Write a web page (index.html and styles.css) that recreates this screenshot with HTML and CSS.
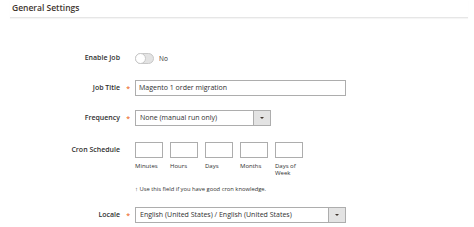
FILE: index.html
```html
<!DOCTYPE html>
<html lang="en">
<head>
  <meta charset="UTF-8" />
  <title>General Settings</title>
  <link rel="stylesheet" href="styles.css">
</head>
<body>
  <div class="fieldset">
    <div class="fieldset-title">General Settings</div>

    <div class="field">
      <div class="field-label"><span>Enable Job</span></div>
      <div class="control">
        <span class="switch"><span class="knob"></span></span>
        <span class="switch-text">No</span>
      </div>
    </div>

    <div class="field">
      <div class="field-label required"><span>Job Title</span></div>
      <div class="control">
        <div class="input wide">Magento 1 order migration</div>
      </div>
    </div>

    <div class="field">
      <div class="field-label required"><span>Frequency</span></div>
      <div class="control">
        <div class="select">
          <span class="select-value">None (manual run only)</span>
          <span class="select-btn"><i></i></span>
        </div>
      </div>
    </div>

    <div class="field cron">
      <div class="field-label"><span>Cron Schedule</span></div>
      <div class="control">
        <div class="cron-row">
          <div class="cron-item"><div class="input box"></div><div class="note">Minutes</div></div>
          <div class="cron-item"><div class="input box"></div><div class="note">Hours</div></div>
          <div class="cron-item"><div class="input box"></div><div class="note">Days</div></div>
          <div class="cron-item"><div class="input box"></div><div class="note">Months</div></div>
          <div class="cron-item"><div class="input box"></div><div class="note">Days of<br>Week</div></div>
        </div>
        <div class="hint">&uarr; Use this field if you have good cron knowledge.</div>
      </div>
    </div>

    <div class="field">
      <div class="field-label required"><span>Locale</span></div>
      <div class="control">
        <div class="select select-wide">
          <span class="select-value">English (United States) / English (United States)</span>
          <span class="select-btn"><i></i></span>
        </div>
      </div>
    </div>
  </div>
</body>
</html>
```

FILE: styles.css
```css
body {
  margin: 0;
  background: #ffffff;
  font-family: "Open Sans", "Liberation Sans", sans-serif;
  color: #303030;
}
.fieldset-title {
  margin: 0 6px 0 10px;
  padding: 2px 0 4px 2px;
  font-size: 8.5px;
  line-height: 11px;
  font-weight: 600;
  color: #41362f;
  border-bottom: 1px solid #e6e6e6;
  box-shadow: 0 1px 1px rgba(0, 0, 0, 0.04);
}
.field {
  display: flex;
  align-items: flex-start;
  margin-bottom: 14px;
}
.fieldset-title + .field {
  margin-top: 32px;
}
.field.cron {
  margin-top: 16px;
}
.field-label {
  width: 120px;
  flex-shrink: 0;
  padding-right: 15px;
  position: relative;
  text-align: right;
  font-size: 7px;
  line-height: 16px;
  font-weight: 600;
  color: #303030;
}
.field-label.required::after {
  content: "*";
  position: absolute;
  right: 5px;
  top: 1px;
  color: #eb5202;
  font-size: 7px;
  font-weight: 400;
}
.control {
  display: flex;
  align-items: center;
  min-height: 16px;
  flex-wrap: wrap;
}
.cron .control {
  display: block;
}
.switch {
  position: relative;
  display: inline-block;
  width: 17px;
  height: 9px;
  border: 1px solid #c8c8c8;
  border-radius: 6px;
  background: #e3e3e3;
}
.knob {
  position: absolute;
  left: -1px;
  top: -1px;
  width: 9px;
  height: 9px;
  border: 1px solid #c8c8c8;
  border-radius: 50%;
  background: #ffffff;
}
.switch-text {
  margin-left: 5px;
  font-size: 6.5px;
  color: #303030;
}
.input {
  box-sizing: border-box;
  height: 16px;
  border: 1px solid #adadad;
  background: #ffffff;
  font-size: 7px;
  line-height: 14px;
  padding: 0 3px;
  color: #303030;
}
.wide {
  width: 211px;
}
.select {
  box-sizing: border-box;
  display: flex;
  width: 136px;
  height: 16px;
  border: 1px solid #adadad;
  background: #ffffff;
  font-size: 7px;
  line-height: 14px;
}
.select-wide {
  width: 211px;
}
.select-value {
  flex: 1;
  padding: 0 4px;
  white-space: nowrap;
  overflow: hidden;
}
.select-btn {
  width: 16px;
  border-left: 1px solid #adadad;
  background: #e3e3e3;
  display: flex;
  align-items: center;
  justify-content: center;
}
.select-btn i {
  width: 0;
  height: 0;
  border-left: 2px solid transparent;
  border-right: 2px solid transparent;
  border-top: 2.5px solid #41362f;
}
.cron-row {
  display: flex;
  gap: 7px;
}
.cron-item {
  width: 28px;
}
.box {
  width: 28px;
}
.note {
  margin-top: 5px;
  font-size: 6px;
  line-height: 7px;
  color: #303030;
  white-space: nowrap;
}
.hint {
  margin-top: 8px;
  font-size: 5.8px;
  line-height: 8px;
  color: #303030;
}
```
